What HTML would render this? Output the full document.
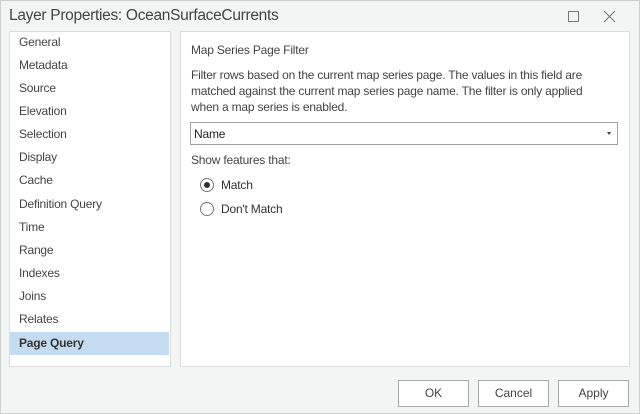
<!DOCTYPE html>
<html><head><style>
*{margin:0;padding:0;box-sizing:border-box}
body{width:640px;height:414px;background:#f3f4f4;font-family:"Liberation Sans",sans-serif;color:#3a3a3a;position:relative;overflow:hidden}
.abs{position:absolute}
.title{left:9px;top:7px;font-size:15.5px;color:#444;letter-spacing:-0.3px}
.panel{background:#fff;border:1px solid #dcdcdc}
.item{position:absolute;left:10px;width:159px;height:23px;font-size:12px;line-height:23px;padding-left:9px;color:#444;letter-spacing:-0.2px}
.sel{background:#c5dcf0;font-weight:bold;color:#333}
.t{font-size:12px;letter-spacing:-0.2px;color:#444}
.btn{position:absolute;top:380px;width:71px;height:27px;border:1px solid #a8a8a8;background:#fff;font-size:12px;text-align:center;line-height:25px;color:#444}
.radio{position:absolute;left:200px;width:14px;height:14px;border:1px solid #777;border-radius:50%;background:#fff}
</style></head><body>
<div class="abs" style="left:0;top:0;width:640px;height:414px;border:1px solid #cfd0d0"></div>
<div class="abs title">Layer Properties: OceanSurfaceCurrents</div>
<div class="abs" style="left:568px;top:11px;width:11px;height:11px;border:1px solid #777"></div>
<svg class="abs" style="left:603px;top:10px" width="13" height="13"><path d="M1 1L12 12M12 1L1 12" stroke="#777" stroke-width="1.1"/></svg>
<div class="abs panel" style="left:9px;top:31px;width:162px;height:336px"></div>
<div class="item" style="top:31px">General</div>
<div class="item" style="top:54px">Metadata</div>
<div class="item" style="top:77px">Source</div>
<div class="item" style="top:100px">Elevation</div>
<div class="item" style="top:123px">Selection</div>
<div class="item" style="top:146px">Display</div>
<div class="item" style="top:169px">Cache</div>
<div class="item" style="top:193px">Definition Query</div>
<div class="item" style="top:216px">Time</div>
<div class="item" style="top:239px">Range</div>
<div class="item" style="top:262px">Indexes</div>
<div class="item" style="top:285px">Joins</div>
<div class="item" style="top:308px">Relates</div>
<div class="item sel" style="top:332px">Page Query</div>
<div class="abs panel" style="left:180px;top:31px;width:450px;height:336px"></div>
<div class="abs t" style="left:191px;top:43px">Map Series Page Filter</div>
<div class="abs t" style="left:191px;top:67px;width:418px;line-height:16px">Filter rows based on the current map series page. The values in this field are matched against the current map series page name. The filter is only applied when a map series is enabled.</div>
<div class="abs" style="left:190px;top:122px;width:428px;height:23px;border:1px solid #a0a0a0;background:#fff"></div>
<div class="abs t" style="left:194px;top:127px;color:#222">Name</div>
<div class="abs" style="left:607px;top:132px;width:0;height:0;border-left:2px solid transparent;border-right:2px solid transparent;border-top:3px solid #444"></div>
<div class="abs t" style="left:191px;top:153px">Show features that:</div>
<div class="radio" style="top:178px"><div style="position:absolute;left:3px;top:3px;width:6px;height:6px;border-radius:50%;background:#333"></div></div>
<div class="abs t" style="left:221px;top:178px;color:#333">Match</div>
<div class="radio" style="top:202px"></div>
<div class="abs t" style="left:221px;top:202px;color:#333">Don't Match</div>
<div class="btn" style="left:398px">OK</div>
<div class="btn" style="left:478px">Cancel</div>
<div class="btn" style="left:558px">Apply</div>
</body></html>
